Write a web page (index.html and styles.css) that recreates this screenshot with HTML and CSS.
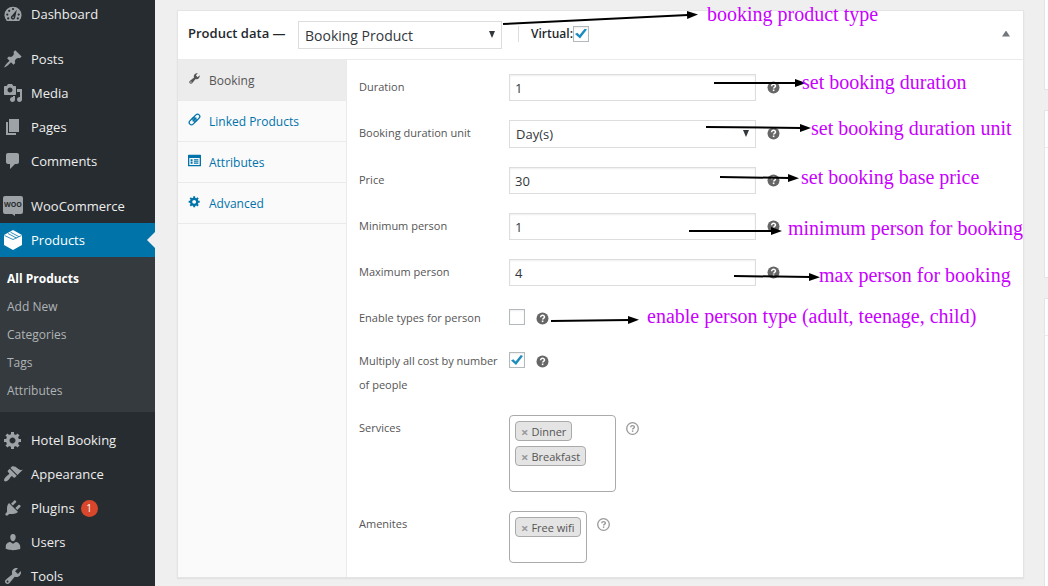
FILE: index.html
```html
<!DOCTYPE html>
<html lang="en">
<head>
<meta charset="utf-8">
<title>Edit product</title>
<link rel="stylesheet" href="styles.css">
</head>
<body>
<svg class="defs" aria-hidden="true">
  <symbol id="tools" viewBox="0 0 20 20"><path fill-rule="evenodd" d="M16.68 9.77c-1.34 1.34-3.3 1.67-4.95.99l-5.41 6.52c-.99.99-2.59.99-3.58 0s-.99-2.59 0-3.57l6.52-5.42c-.68-1.65-.35-3.61.99-4.95 1.28-1.28 3.12-1.62 4.72-1.06l-2.89 2.89 2.82 2.82 2.86-2.87c.53 1.58.18 3.39-1.08 4.65zM3.81 16.21c.4.39 1.04.39 1.43 0 .4-.4.4-1.04 0-1.43-.39-.4-1.03-.4-1.43 0-.39.39-.39 1.03 0 1.43z"/></symbol>
  <symbol id="gear" viewBox="0 0 20 20"><path fill-rule="evenodd" d="M18 12h-2.180c-.17.7-.44 1.350-.81 1.930l1.540 1.540-2.100 2.100-1.540-1.540c-.58.36-1.230.63-1.910.79V19H8v-2.180c-.68-.16-1.330-.43-1.910-.79l-1.540 1.540-2.120-2.120 1.540-1.540c-.36-.58-.63-1.230-.79-1.910H1V9.030h2.170c.16-.7.44-1.350.8-1.940L2.430 5.550l2.100-2.100 1.540 1.540c.58-.37 1.240-.64 1.930-.81V2h3v2.180c.68.16 1.330.43 1.910.79l1.540-1.540 2.120 2.120-1.540 1.540c.36.59.64 1.240.8 1.940H18V12zm-8.500 1.500c1.660 0 3-1.340 3-3s-1.340-3-3-3-3 1.340-3 3 1.340 3 3 3z"/></symbol>
  <symbol id="help" viewBox="0 0 13 13"><circle cx="6.5" cy="6.5" r="6" fill="#666"/><path d="M4.6 5.2c0-2.6 3.9-2.4 3.9-.2 0 1.3-1.9 1.3-1.9 2.6" fill="none" stroke="#fff" stroke-width="1.5"/><rect x="5.8" y="8.5" width="1.6" height="1.6" fill="#fff"/></symbol>
  <symbol id="help-line" viewBox="0 0 13 13"><circle cx="6.5" cy="6.5" r="5.8" fill="none" stroke="#999" stroke-width="1.3"/><path d="M4.7 5.3c0-2.3 3.7-2.2 3.7-.2 0 1.2-1.8 1.2-1.8 2.4" fill="none" stroke="#999" stroke-width="1.4"/><rect x="5.9" y="8.4" width="1.4" height="1.5" fill="#999"/></symbol>
</svg>

<div class="page">
  <nav class="menu" aria-label="Admin menu">
    <a class="item" href="#"><svg viewBox="0 0 20 20"><path d="M3.8 17a8.5 8.5 0 1 1 12.4 0z"/><g class="hole"><circle cx="10" cy="5" r="1.1"/><circle cx="6.2" cy="6.8" r="1.1"/><circle cx="4.3" cy="10.6" r="1.1"/><circle cx="15.7" cy="10.6" r="1.1"/><circle cx="5.2" cy="14.4" r="1.1"/><circle cx="14.8" cy="14.4" r="1.1"/><path d="M13.8 5.8l-1.6 7.7a2.2 2.2 0 1 1-3.2-2.1z"/></g><circle cx="10.1" cy="13.3" r=".8"/></svg>Dashboard</a>
    <div class="separator"></div>
    <a class="item" href="#"><svg viewBox="0 0 20 20"><path d="M10.44 3.02l1.82-1.82 6.36 6.35-1.83 1.82c-1.05-.68-2.48-.57-3.41.36l-.75.75c-.92.93-1.04 2.35-.35 3.41l-1.83 1.82-2.41-2.41-2.8 2.79c-.42.42-3.38 2.71-3.8 2.29s1.86-3.39 2.28-3.81l2.79-2.79L4.1 9.36l1.83-1.82c1.05.69 2.48.57 3.4-.36l.75-.75c.93-.92 1.05-2.35.36-3.41z"/></svg>Posts</a>
    <a class="item" href="#"><svg viewBox="0 0 20 20"><path fill-rule="evenodd" d="M13 11V4c0-.55-.45-1-1-1h-1.67L9 1H5L3.67 3H2c-.55 0-1 .45-1 1v7c0 .55.45 1 1 1h10c.55 0 1-.45 1-1zM7 4.5c1.38 0 2.5 1.12 2.5 2.5S8.38 9.5 7 9.5 4.5 8.38 4.5 7 5.62 4.5 7 4.5zM14 6h5v10.5c0 1.38-1.12 2.5-2.5 2.5S14 17.88 14 16.5s1.12-2.5 2.5-2.5c.17 0 .34.02.5.05V9h-3V6zm-4 8.05V13h2v3.5c0 1.38-1.12 2.5-2.5 2.5S7 17.88 7 16.5 8.12 14 9.5 14c.17 0 .34.02.5.05z"/></svg>Media</a>
    <a class="item" href="#"><svg viewBox="0 0 20 20"><path d="M6 15V2h10v13H6zm-1 1h8v2H3V5h2v11z"/></svg>Pages</a>
    <a class="item" href="#"><svg viewBox="0 0 20 20"><path d="M5 2h9c1.1 0 2 .9 2 2v7c0 1.1-.9 2-2 2h-2l-5 5v-5H5c-1.1 0-2-.9-2-2V4c0-1.1.9-2 2-2z"/></svg>Comments</a>
    <div class="separator"></div>
    <a class="item" href="#"><svg viewBox="0 0 20 20"><path d="M2 0h16q2 0 2 2v14q0 2-2 2h-6v2l-3-2H2q-2 0-2-2V2q0-2 2-2z"/><text class="woo" x="10" y="11" text-anchor="middle">WOO</text></svg>WooCommerce</a>
    <a class="item current" href="#"><svg viewBox="0 0 20 20"><path d="M10 0l9 5v10l-9 5-9-5V5z"/><path class="seam" d="M1.500 5.500l8.500 4 8.500-4M5 3.500l8.500 4.500M7.500 2.200l8.500 4.500"/></svg>Products</a>
    <div class="submenu">
      <a class="active" href="#">All Products</a>
      <a href="#">Add New</a>
      <a href="#">Categories</a>
      <a href="#">Tags</a>
      <a href="#">Attributes</a>
    </div>
    <div class="separator"></div>
    <a class="item" href="#"><svg><use href="#gear"/></svg>Hotel Booking</a>
    <a class="item" href="#"><svg viewBox="0 0 20 20"><path d="M14.48 11.06L7.41 3.99l1.5-1.5c.5-.56 2.3-.47 3.51.32 1.21.8 1.43 1.28 2.91 2.1 1.18.64 2.45 1.26 4.45.85zm-.71.71L6.7 4.7 4.93 6.47c-.39.39-.39 1.02 0 1.41l1.06 1.06c.39.39.39 1.03 0 1.42-.6.6-1.43 1.11-2.21 1.69-.35.26-.7.53-1.01.84C1.43 14.23.4 16.08 1.4 17.07c.99 1 2.84-.03 4.18-1.36.31-.31.58-.66.85-1.02.57-.78 1.08-1.61 1.69-2.21.39-.39 1.02-.39 1.41 0l1.06 1.06c.39.39 1.02.39 1.41 0z"/></svg>Appearance</a>
    <a class="item" href="#"><svg viewBox="0 0 20 20"><path d="M13.11 4.36L9.87 7.6 8 5.73l3.24-3.24c.35-.34 1.05-.2 1.56.32.52.51.66 1.21.31 1.55zm-8 1.77l.91-1.12 9.01 9.01-1.19.84c-.71.71-2.63 1.16-3.82 1.16H6.14L4.9 17.26c-.59.59-1.54.59-2.12 0-.59-.58-.59-1.53 0-2.12l1.24-1.24v-3.88c0-1.13.4-3.19 1.09-3.89zm7.26 3.97l3.24-3.24c.34-.35 1.04-.21 1.55.31.52.51.66 1.21.31 1.55l-3.24 3.25z"/></svg>Plugins<span class="count">1</span></a>
    <a class="item" href="#"><svg viewBox="0 0 20 20"><path d="M10 9.25c-2.27 0-2.73-3.44-2.73-3.44C7 4.02 7.82 2 9.97 2c2.16 0 2.98 2.02 2.71 3.81 0 0-.41 3.44-2.68 3.44zm0 2.57L12.72 10c2.39 0 4.52 2.33 4.52 4.53v2.49s-3.65 1.13-7.24 1.13c-3.65 0-7.24-1.13-7.24-1.13v-2.49c0-2.25 1.94-4.48 4.47-4.48z"/></svg>Users</a>
    <a class="item" href="#"><svg><use href="#tools"/></svg>Tools</a>
  </nav>

  <main class="panel">
    <header class="panel-head">
      <label class="title" for="type">Product data —</label>
      <div class="select type"><select id="type"><option>Booking Product</option></select></div>
      <label class="virtual">Virtual:<input type="checkbox" checked></label>
      <button class="toggle" type="button" aria-label="Toggle panel"></button>
    </header>
    <div class="panel-body">
      <nav class="tabs" aria-label="Product data">
        <a class="selected" href="#"><svg><use href="#tools"/></svg>Booking</a>
        <a href="#"><svg viewBox="0 0 20 20"><g fill="none" stroke="currentColor" stroke-width="2" transform="rotate(-45 10 10)"><rect x="0" y="6.500" width="12" height="7" rx="3.500"/><rect x="8" y="6.500" width="12" height="7" rx="3.500"/><path d="M6 10h8"/></g></svg>Linked Products</a>
        <a href="#"><svg viewBox="0 0 20 20"><path fill-rule="evenodd" d="M1 1h18q1 0 1 1v16q0 1-1 1H1q-1 0-1-1V2q0-1 1-1zM2 6v11h16V6zM4 8h3v3H4zM9 8h7v2H9zM9 11h7v2H9zM4 12h3v3H4zM9 14h7v1H9z"/></svg>Attributes</a>
        <a href="#"><svg><use href="#gear"/></svg>Advanced</a>
      </nav>
      <form class="fields">
        <div class="row"><label for="duration">Duration</label><input class="text" id="duration" type="text" value="1"><svg class="help"><use href="#help"/></svg></div>
        <div class="row"><label for="unit">Booking duration unit</label><div class="select"><select id="unit"><option>Day(s)</option></select></div><svg class="help"><use href="#help"/></svg></div>
        <div class="row"><label for="price">Price</label><input class="text" id="price" type="text" value="30"><svg class="help"><use href="#help"/></svg></div>
        <div class="row"><label for="min">Minimum person</label><input class="text" id="min" type="text" value="1"><svg class="help"><use href="#help"/></svg></div>
        <div class="row"><label for="max">Maximum person</label><input class="text" id="max" type="text" value="4"><svg class="help"><use href="#help"/></svg></div>
        <div class="row"><label for="types">Enable types for person</label><input id="types" type="checkbox"><svg class="help"><use href="#help"/></svg></div>
        <div class="row"><label for="multiply">Multiply all cost by number of people</label><input id="multiply" type="checkbox" checked><svg class="help"><use href="#help"/></svg></div>
        <div class="row"><span class="label">Services</span>
          <div class="tags services"><span class="tag"><button type="button" aria-label="Remove Dinner">×</button>Dinner</span><span class="tag"><button type="button" aria-label="Remove Breakfast">×</button>Breakfast</span></div>
          <svg class="help"><use href="#help-line"/></svg></div>
        <div class="row"><span class="label">Amenites</span>
          <div class="tags amenities"><span class="tag"><button type="button" aria-label="Remove Free wifi">×</button>Free wifi</span></div>
          <svg class="help"><use href="#help-line"/></svg></div>
      </form>
    </div>
  </main>

  <aside class="side">
    <div class="box first"></div>
    <div class="box second"></div>
    <div class="box third"></div>
  </aside>
</div>

<svg class="arrows" aria-hidden="true">
  <defs><marker id="head" markerUnits="userSpaceOnUse" markerWidth="11" markerHeight="10" refX="1" refY="5" orient="auto"><path d="M0 1L11 5L0 9z"/></marker></defs>
  <g stroke="#000" stroke-width="2">
    <path marker-end="url(#head)" d="M503 24L688 15"/>
    <path marker-end="url(#head)" d="M714 83H796"/>
    <path marker-end="url(#head)" d="M706 127L801 128"/>
    <path marker-end="url(#head)" d="M720 177L789 178"/>
    <path marker-end="url(#head)" d="M689 231H772"/>
    <path marker-end="url(#head)" d="M734 276L810 277"/>
    <path marker-end="url(#head)" d="M551 321L629 320"/>
  </g>
</svg>
<span class="note note-type">booking product type</span>
<span class="note note-duration">set booking duration</span>
<span class="note note-unit">set booking duration unit</span>
<span class="note note-price">set booking base price</span>
<span class="note note-min">minimum person for booking</span>
<span class="note note-max">max person for booking</span>
<span class="note note-enable">enable person type (adult, teenage, child)</span>
</body>
</html>
```
FILE: styles.css
```css
* { box-sizing: border-box; }

body {
  position: relative;
  height: 100vh;
  margin: 0;
  overflow: hidden;
  background: #efefef;
  color: #555;
  font: 12px/24px "Open Sans", "Noto Sans", sans-serif;
}

a { color: inherit; text-decoration: none; }
svg { fill: currentColor; flex: none; }
.defs { position: absolute; width: 0; height: 0; }

.page { display: flex; align-items: flex-start; height: 100%; }

/* Admin menu */
.menu {
  flex: none;
  width: 155px;
  height: 100vh;
  overflow: hidden;
  background: #272c30;
}
.menu > .item:first-child { margin-top: -3px; }
.item {
  position: relative;
  display: flex;
  align-items: center;
  gap: 8px;
  height: 34px;
  padding-left: 3px;
  color: #eee;
  font-size: 13px;
}
.item svg { width: 20px; height: 20px; color: #9da2a6; }
.hole { fill: #272c30; }
.woo { fill: #272c30; font: bold 7px "Open Sans", sans-serif; }
.seam { fill: none; stroke: #0074a8; stroke-width: 0.8; }
.separator { height: 11px; }
.current { background: #0074a8; color: #fff; }
.current svg { color: #fff; }
.current::after {
  content: "";
  position: absolute;
  right: 0;
  top: 9px;
  border: solid transparent;
  border-width: 8px 8px 8px 0;
  border-right-color: #efefef;
}
.submenu { padding: 8px 7px 7px; background: #353a3e; color: #b0b4b7; font-size: 12px; }
.submenu a { display: block; line-height: 28px; }
.submenu .active { color: #fff; font-weight: 700; }
.count {
  width: 17px;
  height: 17px;
  margin-left: -2px;
  border-radius: 50%;
  background: #d8472b;
  color: #fff;
  font-size: 10px;
  line-height: 17px;
  text-align: center;
}

/* Product data panel */
.panel {
  flex: 1;
  margin: 10px 20px 0 22px;
  border: 1px solid #e4e4e4;
  background: #fff;
  box-shadow: 0 1px 1px #e2e2e2;
}
.panel-head {
  display: flex;
  align-items: center;
  height: 49px;
  padding: 0 12px 0 10px;
  border-bottom: 1px solid #eaeaea;
  color: #23282d;
}
.title { width: 110px; padding-bottom: 4px; font-size: 13px; font-weight: 600; white-space: nowrap; }
.virtual {
  display: flex;
  align-items: center;
  gap: 2px;
  height: 16px;
  margin: 0 0 3px 16px;
  padding-left: 12px;
  border-left: 1px solid #ddd;
  font-weight: 600;
}
.virtual [type="checkbox"] { margin-left: -2px; }
.toggle {
  width: 8px;
  height: 6px;
  margin: 0 1px 3px auto;
  border: 0;
  padding: 0;
  background: #72777c;
  clip-path: polygon(50% 0, 100% 100%, 0 100%);
}
.panel-body { display: flex; }

.tabs { width: 169px; border-right: 1px solid #eaeaea; background: #fafafa; }
.tabs a {
  display: flex;
  align-items: center;
  gap: 8px;
  height: 41px;
  padding: 2px 0 0 10px;
  border-bottom: 1px solid #eaeaea;
  color: #0073aa;
  font-size: 12px;
}
.tabs svg { width: 13px; height: 13px; margin-bottom: 5px; }
.tabs .selected { background: #ececec; color: #555; }

/* Controls */
input, select, button { font-family: inherit; }
.select { position: relative; width: 247px; }
.select::after {
  content: "";
  position: absolute;
  top: 10px;
  right: 7px;
  width: 6px;
  height: 7px;
  background: #32373c;
  clip-path: polygon(0 0, 100% 0, 50% 100%);
}
.select.type { width: 204px; }
.text, select {
  width: 247px;
  height: 27px;
  padding: 0 6px;
  border: 1px solid #ddd;
  background: #fff;
  color: #32373c;
  font-size: 13px;
}
.text { padding: 0 5px; box-shadow: inset 0 1px 2px #eee; }
select { display: block; width: 100%; height: 28px; appearance: none; }
.type select { font-size: 14px; font-weight: 500; }
[type="checkbox"] {
  appearance: none;
  flex: none;
  width: 16px;
  height: 16px;
  margin: 0;
  border: 1px solid #b4b9be;
  background: #fff;
  box-shadow: inset 0 1px 2px #eee;
}
[type="checkbox"]:checked::before {
  content: "";
  display: block;
  width: 12px;
  height: 10px;
  margin: 2px 1px;
  background: #1e8cbe;
  clip-path: polygon(0 55%, 20% 42%, 38% 66%, 82% 0, 100% 10%, 42% 100%);
}

/* Fields */
.fields { display: flex; flex: 1; flex-direction: column; gap: 19px; padding: 14px 12px; }
.row { display: flex; align-items: flex-start; }
.row > label, .label { flex: none; width: 150px; margin: 1px 0 -1px; font-size: 11px; }
.row > [type="checkbox"] { margin-top: 4px; }
.help { width: 13px; height: 13px; margin: 7px 0 0 11px; }
.tags {
  display: flex;
  flex-wrap: wrap;
  align-content: flex-start;
  gap: 5px;
  padding: 5px;
  border: 1px solid #aaa;
  border-radius: 4px;
}
.tags + .help { margin-left: 10px; }
.services { width: 107px; height: 77px; }
.amenities { width: 78px; height: 52px; }
.tag {
  display: flex;
  gap: 3px;
  height: 20px;
  padding: 0 5px;
  border: 1px solid #aaa;
  border-radius: 4px;
  background: #e4e4e4;
  font-size: 11px;
  line-height: 20px;
  white-space: nowrap;
}
.tag button { border: 0; padding: 0; background: none; color: #999; font-size: 13px; font-weight: 700; line-height: 20px; }

/* Neighbouring column, cut by the window edge */
.side { display: flex; flex: none; flex-direction: column; width: 4px; height: 100%; overflow: hidden; }
.box { border: 1px solid #e4e4e4; border-right: 0; background: #fff; }
.box::before { content: ""; display: block; height: 36px; border-bottom: 1px solid #eaeaea; }
.first { height: 90px; border-top: 0; }
.first::before { display: none; }
.second { height: 168px; margin: 20px 0; }
.third { flex: 1; border-bottom: 0; }

/* Annotations */
.arrows { position: absolute; top: 0; left: 0; width: 100%; height: 100%; pointer-events: none; fill: #000; }
.note {
  position: absolute;
  color: #c800ff;
  font: 20px/24px "Liberation Serif", serif;
  white-space: nowrap;
}
.note-type { left: 707px; top: 2px; }
.note-duration { left: 802px; top: 70px; }
.note-unit { left: 811px; top: 116px; }
.note-price { left: 801px; top: 165px; }
.note-min { left: 788px; top: 216px; }
.note-max { left: 819px; top: 263px; }
.note-enable { left: 647px; top: 304px; }
```
